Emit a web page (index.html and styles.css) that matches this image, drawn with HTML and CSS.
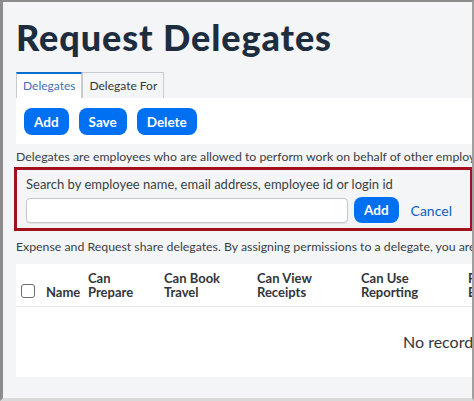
FILE: index.html
```html
<!DOCTYPE html>
<html lang="en">
<head>
  <meta charset="UTF-8">
  <title>Request Delegates</title>
  <link rel="stylesheet" href="styles.css">
</head>
<body>

  <div class="frame">
    <div class="page">

      <h1>Request Delegates</h1>

      <div class="tabs">
        <div class="tab active">Delegates</div>
        <div class="tab">Delegate For</div>
      </div>

      <div class="toolbar">
        <button class="btn">Add</button>
        <button class="btn">Save</button>
        <button class="btn">Delete</button>
      </div>

      <p class="note">Delegates are employees who are allowed to perform work on behalf of other employees.</p>

      <div class="search-box">
        <label for="search">Search by employee name, email address, employee id or login id</label>
        <div class="search-row">
          <input id="search" type="text">
          <button class="btn">Add</button>
          <a class="link" href="#">Cancel</a>
        </div>
      </div>

      <p class="note">Expense and Request share delegates. By assigning permissions to a delegate, you are allowing them to act for you.</p>

      <div class="table">
        <div class="table-head">
          <div class="col col-check"><span class="checkbox"></span></div>
          <div class="col col-name">Name</div>
          <div class="col col-prepare">Can<br>Prepare</div>
          <div class="col col-book">Can Book<br>Travel</div>
          <div class="col col-receipts">Can View<br>Receipts</div>
          <div class="col col-reporting">Can Use<br>Reporting</div>
          <div class="col col-receive">Receives<br>Emails</div>
        </div>
        <div class="table-empty">No records found</div>
      </div>

    </div>
  </div>

</body>
</html>
```

FILE: styles.css
```css
html, body {
  margin: 0;
  padding: 0;
}
body {
  font-family: Lato, 'Noto Sans', sans-serif;
  background: #f5f6f7;
}
.frame {
  width: 474px;
  height: 401px;
  box-sizing: border-box;
  border-left: 3px solid #8c8c8c;
  border-top: 2px solid #8c8c8c;
  border-right: 2px solid #a0a0a0;
  border-bottom: 3px solid #d9d9d9;
  background: #f4f5f6;
  overflow: hidden;
}
.page {
  padding: 0 0 0 13px;
  width: 560px;
}
h1 {
  margin: 0;
  padding-top: 14px;
  font-size: 36px;
  font-weight: 900;
  color: #1d2d3e;
  letter-spacing: 0.9px;
  line-height: 42px;
}
.tabs {
  display: flex;
  margin-top: 14px;
}
.tab {
  font-size: 12px;
  color: #32363a;
  padding: 5px 6px 4px;
  border: 1px solid #c7cbd0;
  border-bottom: none;
  background: #f4f5f6;
  line-height: 15px;
}
.tab.active {
  color: #3f6fb5;
  background: #fff;
  border-top: 2px solid #0a6ed1;
  padding-top: 4px;
  padding-bottom: 5px;
}
.toolbar {
  display: flex;
  gap: 10px;
  background: #fff;
  padding: 10px 8px 9px;
}
.btn {
  font-family: inherit;
  font-size: 13.5px;
  font-weight: 700;
  color: #fff;
  background: #0070f2;
  border: none;
  border-radius: 8px;
  height: 27px;
  padding: 0 10px;
}
.note {
  margin: 0;
  font-size: 12.3px;
  color: #3a3f45;
  white-space: nowrap;
  line-height: 16px;
}
.toolbar + .note {
  margin-top: 5px;
}
.search-box {
  width: 444px;
  margin: 2px 0 0 -2px;
  border: 3px solid #a3101e;
  padding: 6px 0 5px 9px;
}
.search-box label {
  display: block;
  font-size: 13px;
  color: #3a3f45;
  line-height: 16px;
  margin-bottom: 5px;
}
.search-row {
  display: flex;
  align-items: center;
}
.search-row input {
  width: 322px;
  height: 25px;
  box-sizing: border-box;
  border: 1px solid #c4c9ce;
  border-radius: 4px;
  box-shadow: 0 1px 1px rgba(0,0,0,0.08);
  margin: 0 6px 0 0;
}
.search-row .btn {
  height: 26px;
}
.link {
  color: #0a5fc4;
  font-size: 14px;
  text-decoration: none;
  margin-left: 12px;
}
.search-box + .note {
  margin-top: 8px;
}
.table {
  margin-top: 9px;
  background: #fff;
  height: 113px;
}
.table-head {
  display: flex;
  align-items: flex-end;
  height: 43px;
  border-bottom: 1px solid #e5e5e5;
  font-size: 13px;
  font-weight: 700;
  color: #32363a;
  line-height: 14px;
  box-sizing: border-box;
  padding-bottom: 7px;
}
.col-check {
  width: 30px;
  padding-left: 5px;
  box-sizing: border-box;
}
.checkbox {
  display: block;
  width: 12px;
  height: 12px;
  border: 1px solid #6a6d70;
  border-radius: 3px;
  margin-bottom: 1px;
}
.col-name { width: 42px; }
.col-prepare { width: 76px; }
.col-book { width: 93px; }
.col-receipts { width: 104px; }
.col-reporting { width: 107px; }
.table-empty {
  font-size: 16px;
  color: #32363a;
  padding: 25px 0 0 387px;
  white-space: nowrap;
}
```
